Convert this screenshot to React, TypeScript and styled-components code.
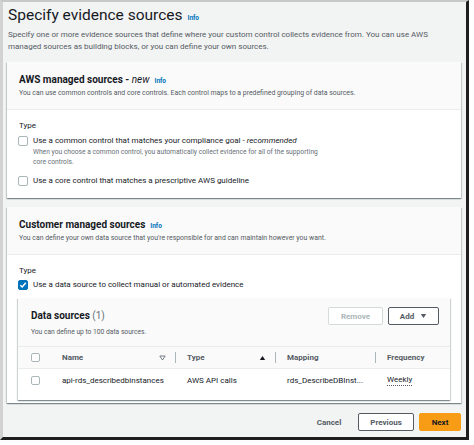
import React from 'react';
import styled, { createGlobalStyle } from 'styled-components';

const GlobalStyle = createGlobalStyle`
  html, body { margin: 0; padding: 0; background: #ffffff; }
  body { font-family: Roboto, "Open Sans", Arial, sans-serif; color: #16191f; }
  * { box-sizing: border-box; }
`;

const Frame = styled.div`
  width: 469px;
  height: 440px;
  border-top: 2px solid #c8c8c8;
  border-left: 3px solid #d2d2d2;
  border-right: 3px solid #1e1e1e;
  border-bottom: 3px solid #1e1e1e;
  background: #f2f3f3;
  overflow: hidden;
  display: flex;
  flex-direction: column;
  padding: 0 5px 0 4px;
`;

const PageHeader = styled.header`
  padding: 2px 0 0 1px;
`;

const Title = styled.h1`
  margin: 0;
  font-size: 15.5px;
  line-height: 22px;
  font-weight: 400;
  color: #16191f;
  display: flex;
  align-items: baseline;
  gap: 5px;
`;

const Info = styled.span<{ $size?: number }>`
  color: #0073bb;
  font-weight: 700;
  font-size: ${(p) => p.$size ?? 6.5}px;
`;

const Lead = styled.p`
  margin: 0;
  font-size: 8px;
  line-height: 12px;
  color: #545b64;
`;

const Card = styled.section<{ $top: number }>`
  margin-top: ${(p) => p.$top}px;
  background: #ffffff;
  box-shadow: 0 1px 1px 0 rgba(0, 28, 36, 0.3), 1px 1px 1px 0 rgba(0, 28, 36, 0.15),
    -1px 1px 1px 0 rgba(0, 28, 36, 0.15);
`;

const CardHeader = styled.div`
  background: #fafafa;
  border-bottom: 1px solid #eaeded;
  padding: 11px 12px 10px;
`;

const CardTitle = styled.h2`
  margin: 0;
  font-size: 10px;
  line-height: 13px;
  font-weight: 700;
  color: #16191f;
  display: flex;
  align-items: baseline;
  gap: 5px;
`;

const Em = styled.em`
  font-weight: 400;
`;

const CardDesc = styled.p`
  margin: 0;
  font-size: 6.9px;
  line-height: 11px;
  color: #545b64;
`;

const CardBody = styled.div<{ $bottom: number }>`
  padding: 10px 11px ${(p) => p.$bottom}px 11px;
`;

const FieldLabel = styled.div`
  font-size: 8px;
  line-height: 12px;
  color: #16191f;
  padding-left: 1px;
`;

const CheckRow = styled.label<{ $top: number }>`
  display: flex;
  align-items: center;
  gap: 5px;
  margin-top: ${(p) => p.$top}px;
  font-size: 8px;
  line-height: 12px;
  color: #16191f;
`;

const Box = styled.span<{ $checked?: boolean; $size?: number }>`
  flex: none;
  width: ${(p) => p.$size ?? 10}px;
  height: ${(p) => p.$size ?? 10}px;
  border-radius: 2px;
  border: 1px solid ${(p) => (p.$checked ? '#0073bb' : '#aab7b8')};
  background: ${(p) => (p.$checked ? '#0073bb' : '#ffffff')};
  display: inline-flex;
  align-items: center;
  justify-content: center;
`;

const Helper = styled.div`
  padding-left: 15px;
  font-size: 6.7px;
  line-height: 10px;
  color: #687078;
`;

const InnerContainer = styled.div`
  margin: 7px 0 0;
  background: #ffffff;
  box-shadow: 0 1px 1px 0 rgba(0, 28, 36, 0.3), 1px 1px 1px 0 rgba(0, 28, 36, 0.15),
    -1px 1px 1px 0 rgba(0, 28, 36, 0.15);
  padding-bottom: 8px;
`;

const InnerHeader = styled.div`
  background: #fafafa;
  padding: 9px 11px 9px 13px;
  display: flex;
  justify-content: space-between;
  align-items: flex-start;
`;

const InnerTitle = styled.div`
  font-size: 10px;
  line-height: 18px;
  font-weight: 700;
  color: #16191f;
`;

const Count = styled.span`
  font-weight: 400;
  color: #687078;
`;

const InnerDesc = styled.div`
  margin-top: 2px;
  font-size: 6.7px;
  line-height: 10px;
  color: #545b64;
`;

const Actions = styled.div`
  display: flex;
  gap: 5px;
`;

const Button = styled.button<{ $variant: 'normal' | 'disabled' | 'primary' | 'link'; $w: number }>`
  width: ${(p) => p.$w}px;
  height: 18px;
  padding: 0;
  border-radius: 2px;
  font-family: inherit;
  font-size: 8px;
  font-weight: 700;
  display: inline-flex;
  align-items: center;
  justify-content: center;
  gap: 6px;
  cursor: pointer;
  border: 1px solid
    ${(p) =>
      p.$variant === 'normal' ? '#545b64' : p.$variant === 'disabled' ? '#d5dbdb' : p.$variant === 'primary' ? '#f89b15' : 'transparent'};
  background: ${(p) => (p.$variant === 'primary' ? '#f89b15' : p.$variant === 'link' ? 'transparent' : '#ffffff')};
  color: ${(p) => (p.$variant === 'disabled' ? '#aab7b8' : p.$variant === 'primary' ? '#16191f' : '#545b64')};
`;

const Table = styled.div`
  display: grid;
  grid-template-columns: 32px 125px 100px 100px 1fr;
`;

const HeadCell = styled.div<{ $pad?: number }>`
  height: 23px;
  background: #fafafa;
  border-top: 1px solid #eaeded;
  border-bottom: 1px solid #eaeded;
  display: flex;
  align-items: center;
  padding: 0 9px 0 ${(p) => p.$pad ?? 0}px;
  font-size: 8px;
  font-weight: 700;
  color: #545b64;
`;

const Divider = styled.span`
  width: 1px;
  height: 11px;
  background: #aab7b8;
  margin-right: 11px;
  flex: none;
`;

const HeadText = styled.span`
  flex: 1;
`;

const BodyCell = styled.div<{ $pad?: number }>`
  height: 23px;
  display: flex;
  align-items: center;
  padding-left: ${(p) => p.$pad ?? 0}px;
  font-size: 8px;
  color: #16191f;
  white-space: nowrap;
`;

const Dotted = styled.span`
  border-bottom: 1px dotted #545b64;
  line-height: 10px;
`;

const Footer = styled.div`
  margin-top: 10px;
  display: flex;
  justify-content: flex-end;
  gap: 5px;
`;

const Check = () => (
  <svg width="8" height="8" viewBox="0 0 8 8">
    <path d="M1.3 4.2 L3.2 6 L6.8 1.8" fill="none" stroke="#fff" strokeWidth="1.5" />
  </svg>
);

const TriDown = ({ outline }: { outline?: boolean }) => (
  <svg width="7" height="6" viewBox="0 0 7 6">
    <path
      d="M0.8 1 L6.2 1 L3.5 5 Z"
      fill={outline ? 'none' : '#545b64'}
      stroke="#687078"
      strokeWidth={outline ? 0.9 : 0}
    />
  </svg>
);

const TriUp = () => (
  <svg width="7" height="6" viewBox="0 0 7 6">
    <path d="M0.8 5 L6.2 5 L3.5 1 Z" fill="#16191f" />
  </svg>
);

export default function App() {
  return (
    <>
      <GlobalStyle />
      <Frame>
        <PageHeader>
          <Title>
            Specify evidence sources <Info $size={6.5}>Info</Info>
          </Title>
          <Lead>
            Specify one or more evidence sources that define where your custom control collects evidence from. You can use AWS
            <br />
            managed sources as building blocks, or you can define your own sources.
          </Lead>
        </PageHeader>

        <Card $top={9}>
          <CardHeader>
            <CardTitle>
              <span>
                AWS managed sources - <Em>new</Em>
              </span>
              <Info>Info</Info>
            </CardTitle>
            <CardDesc>
              You can use common controls and core controls. Each control maps to a predefined grouping of data sources.
            </CardDesc>
          </CardHeader>
          <CardBody $bottom={11}>
            <FieldLabel>Type</FieldLabel>
            <CheckRow $top={3}>
              <Box />
              <span>
                Use a common control that matches your compliance goal - <em>recommended</em>
              </span>
            </CheckRow>
            <Helper>
              When you choose a common control, you automatically collect evidence for all of the supporting
              <br />
              core controls.
            </Helper>
            <CheckRow $top={8}>
              <Box />
              <span>Use a core control that matches a prescriptive AWS guideline</span>
            </CheckRow>
          </CardBody>
        </Card>

        <Card $top={9}>
          <CardHeader>
            <CardTitle>
              <span>Customer managed sources</span>
              <Info>Info</Info>
            </CardTitle>
            <CardDesc>
              You can define your own data source that you're responsible for and can maintain however you want.
            </CardDesc>
          </CardHeader>
          <CardBody $bottom={3}>
            <FieldLabel>Type</FieldLabel>
            <CheckRow $top={2}>
              <Box $checked>
                <Check />
              </Box>
              <span>Use a data source to collect manual or automated evidence</span>
            </CheckRow>
            <InnerContainer>
              <InnerHeader>
                <div>
                  <InnerTitle>
                    Data sources <Count>(1)</Count>
                  </InnerTitle>
                  <InnerDesc>You can define up to 100 data sources.</InnerDesc>
                </div>
                <Actions>
                  <Button $variant="disabled" $w={55}>
                    Remove
                  </Button>
                  <Button $variant="normal" $w={51}>
                    Add <TriDown />
                  </Button>
                </Actions>
              </InnerHeader>
              <Table>
                <HeadCell $pad={13}>
                  <Box $size={9} />
                </HeadCell>
                <HeadCell $pad={12}>
                  <HeadText>Name</HeadText>
                  <TriDown outline />
                </HeadCell>
                <HeadCell>
                  <Divider />
                  <HeadText>Type</HeadText>
                  <TriUp />
                </HeadCell>
                <HeadCell>
                  <Divider />
                  <HeadText>Mapping</HeadText>
                </HeadCell>
                <HeadCell>
                  <Divider />
                  <HeadText>Frequency</HeadText>
                </HeadCell>

                <BodyCell $pad={13}>
                  <Box $size={9} />
                </BodyCell>
                <BodyCell $pad={12}>api-rds_describedbinstances</BodyCell>
                <BodyCell $pad={12}>AWS API calls</BodyCell>
                <BodyCell $pad={12}>rds_DescribeDBInst...</BodyCell>
                <BodyCell $pad={12}>
                  <Dotted>Weekly</Dotted>
                </BodyCell>
              </Table>
            </InnerContainer>
          </CardBody>
        </Card>

        <Footer>
          <Button $variant="link" $w={48}>
            Cancel
          </Button>
          <Button $variant="normal" $w={56}>
            Previous
          </Button>
          <Button $variant="primary" $w={42}>
            Next
          </Button>
        </Footer>
      </Frame>
    </>
  );
}
